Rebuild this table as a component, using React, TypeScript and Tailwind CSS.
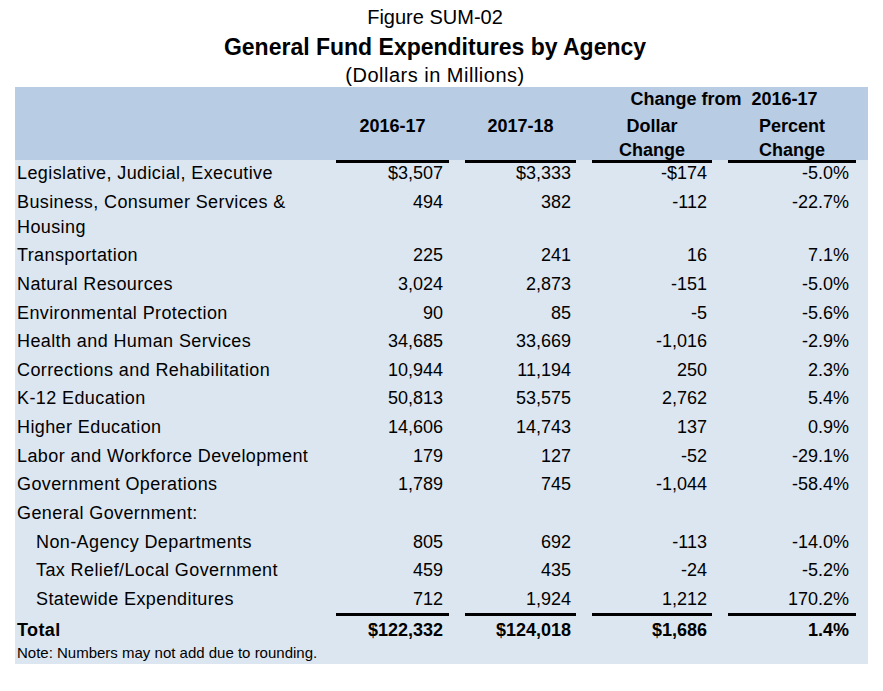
import React from "react";

type Row = {
    label: string;
    values?: string[];
    indent?: boolean;
};

const rows: Row[] = [
    { label: "Legislative, Judicial, Executive", values: ["$3,507", "$3,333", "-$174", "-5.0%"] },
    { label: "Business, Consumer Services & Housing", values: ["494", "382", "-112", "-22.7%"] },
    { label: "Transportation", values: ["225", "241", "16", "7.1%"] },
    { label: "Natural Resources", values: ["3,024", "2,873", "-151", "-5.0%"] },
    { label: "Environmental Protection", values: ["90", "85", "-5", "-5.6%"] },
    { label: "Health and Human Services", values: ["34,685", "33,669", "-1,016", "-2.9%"] },
    { label: "Corrections and Rehabilitation", values: ["10,944", "11,194", "250", "2.3%"] },
    { label: "K-12 Education", values: ["50,813", "53,575", "2,762", "5.4%"] },
    { label: "Higher Education", values: ["14,606", "14,743", "137", "0.9%"] },
    { label: "Labor and Workforce Development", values: ["179", "127", "-52", "-29.1%"] },
    { label: "Government Operations", values: ["1,789", "745", "-1,044", "-58.4%"] },
    { label: "General Government:" },
    { label: "Non-Agency Departments", values: ["805", "692", "-113", "-14.0%"], indent: true },
    { label: "Tax Relief/Local Government", values: ["459", "435", "-24", "-5.2%"], indent: true },
    { label: "Statewide Expenditures", values: ["712", "1,924", "1,212", "170.2%"], indent: true },
];

const grid = "grid grid-cols-[1fr_113px_111px_120px_128px] gap-x-4";
const padRight = ["pr-[6px]", "pr-[5px]", "pr-[5px]", "pr-[7px]"];

const App = () => {
    return (
        <div className="w-[883px] h-[691px] bg-white text-black font-['Liberation_Sans',Arial,sans-serif]">
            <div className="pt-[7px] pr-[13px] text-center">
                <div className="text-[20px] leading-[20px]">Figure SUM-02</div>
                <div className="mt-[9px] text-[23px] leading-[22px] font-bold">
                    General Fund Expenditures by Agency
                </div>
                <div className="mt-[5px] text-[20px] leading-[24px] tracking-[0.5px]">
                    (Dollars in Millions)
                </div>
            </div>

            <div className="ml-[15px] w-[853px] pb-[1px] bg-[#dce6f1]">
                {/* header */}
                <div
                    className={`${grid} grid-rows-[25px_48px] h-[73px] bg-[#b8cce4] pl-[2px] pr-[12px] text-[18px] font-bold`}
                >
                    <div className="col-start-4 col-span-2 text-center leading-[25px]">
                        Change from&nbsp;&nbsp;2016-17
                    </div>
                    <div></div>
                    <div className="h-[51px] pt-[2px] text-center leading-[24px] border-b-[3px] border-black">
                        2016-17
                    </div>
                    <div className="h-[51px] pt-[2px] text-center leading-[24px] border-b-[3px] border-black">
                        2017-18
                    </div>
                    <div className="h-[51px] pt-[2px] text-center leading-[24px] border-b-[3px] border-black">
                        Dollar
                        <br />
                        Change
                    </div>
                    <div className="h-[51px] pt-[2px] text-center leading-[24px] border-b-[3px] border-black">
                        Percent
                        <br />
                        Change
                    </div>
                </div>

                {/* body */}
                <div className="pt-[1px] pl-[2px] pr-[12px] text-[18px] leading-[25px]">
                    {rows.map((row, i) => (
                        <div
                            key={row.label}
                            className={`${grid} ${i === rows.length - 1 ? "" : "pb-[3.64px]"}`}
                        >
                            <div className={`tracking-[0.4px] ${row.indent ? "pl-[19px]" : ""}`}>
                                {row.label}
                            </div>
                            {(row.values ?? ["", "", "", ""]).map((v, j) => (
                                <div key={j} className={`text-right ${padRight[j]}`}>
                                    {v}
                                </div>
                            ))}
                        </div>
                    ))}

                    <div className={`${grid} mt-[1px] font-bold leading-[20px]`}>
                        <div className="pt-[7px] tracking-[0.4px]">Total</div>
                        {["$122,332", "$124,018", "$1,686", "1.4%"].map((v, j) => (
                            <div
                                key={v}
                                className={`text-right pt-[4px] border-t-[3px] border-black ${padRight[j]}`}
                            >
                                {v}
                            </div>
                        ))}
                    </div>

                    <div className="mt-[3px] text-[15px] leading-[20px]">
                        Note: Numbers may not add due to rounding.
                    </div>
                </div>
            </div>
        </div>
    );
};

export default App;
